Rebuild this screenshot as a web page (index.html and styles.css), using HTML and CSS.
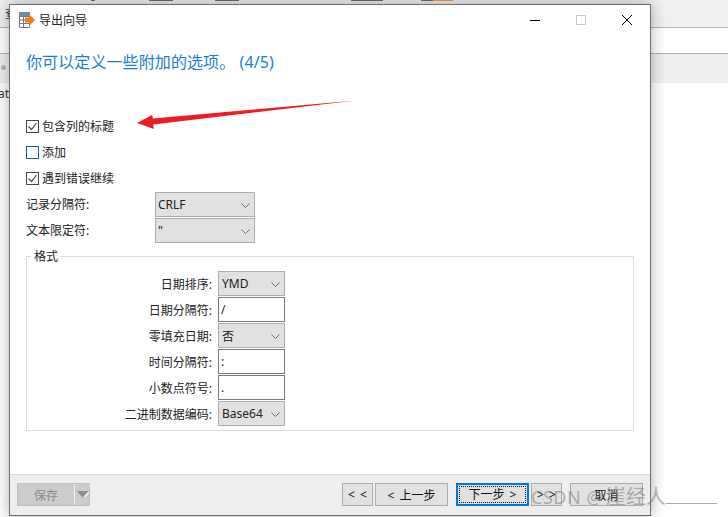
FILE: index.html
```html
<!DOCTYPE html>
<html lang="zh-CN">
<head>
  <meta charset="UTF-8" />
  <title>导出向导</title>
  <link rel="stylesheet" href="styles.css">
</head>
<body>
  <div class="backdrop">
    <div class="band band-top"><span class="cut">查</span></div>
    <div class="band band-white"></div>
    <div class="band band-tabs"><i class="tab-dot"></i></div>
    <div class="band band-rest"><span class="cut">at</span></div>
  </div>
  <div class="top-marks">
    <i class="mark mark-a"></i>
    <i class="mark mark-b"></i>
    <i class="mark mark-c"></i>
    <i class="mark mark-d"></i>
    <i class="mark mark-e"></i>
  </div>

  <div class="window">
    <div class="titlebar">
      <svg class="app-icon" width="17" height="18" viewBox="0 0 17 18">
        <path d="M1.500 1.500h10v15h-10z" fill="#fff" stroke="#77797c"/>
        <path d="M1.500 5.500h10M1.500 9h10M1.500 12.500h10M5.500 5.500v11" stroke="#77797c" fill="none"/>
        <path d="M1 1h11v4H1z" fill="#6f8dab"/>
        <path d="M7 6.500h4V3l6 6-6 6v-3.500H7z" fill="#f47b13"/>
      </svg>
      <span class="title">导出向导</span>
      <div class="win-buttons">
        <svg width="12" height="12" viewBox="0 0 12 12"><path d="M1 6.500h10" stroke="#000"/></svg>
        <svg width="12" height="12" viewBox="0 0 12 12"><path d="M1.500 1.500h9v9h-9z" stroke="#ccc" fill="none"/></svg>
        <svg width="12" height="12" viewBox="0 0 12 12"><path d="M1 1l10 10M11 1L1 11" stroke="#000" fill="none"/></svg>
      </div>
    </div>

    <div class="content">
      <h1>你可以定义一些附加的选项。 (4/5)</h1>

      <label class="check-row">
        <span class="box"><svg width="11" height="11" viewBox="0 0 11 11"><path d="M1.500 5.500l3 3 5-6.500" stroke="#444" stroke-width="1.200" fill="none"/></svg></span>
        包含列的标题
      </label>
      <label class="check-row">
        <span class="box focus"></span>
        添加
      </label>
      <label class="check-row">
        <span class="box"><svg width="11" height="11" viewBox="0 0 11 11"><path d="M1.500 5.500l3 3 5-6.500" stroke="#444" stroke-width="1.200" fill="none"/></svg></span>
        遇到错误继续
      </label>

      <div class="field-row">
        <span class="field-label">记录分隔符:</span>
        <div class="select wide">CRLF<svg class="chev" viewBox="0 0 11 6"><path d="M.5.500l5 5 5-5" stroke="#555" fill="none"/></svg></div>
      </div>
      <div class="field-row">
        <span class="field-label">文本限定符:</span>
        <div class="select wide">"<svg class="chev" viewBox="0 0 11 6"><path d="M.5.500l5 5 5-5" stroke="#555" fill="none"/></svg></div>
      </div>

      <fieldset class="format">
        <legend>格式</legend>
        <div class="format-grid">
          <span class="format-label">日期排序:</span>
          <div class="select">YMD<svg class="chev" viewBox="0 0 11 6"><path d="M.5.500l5 5 5-5" stroke="#555" fill="none"/></svg></div>
          <span class="format-label">日期分隔符:</span>
          <div class="input">/</div>
          <span class="format-label">零填充日期:</span>
          <div class="select">否<svg class="chev" viewBox="0 0 11 6"><path d="M.5.500l5 5 5-5" stroke="#555" fill="none"/></svg></div>
          <span class="format-label">时间分隔符:</span>
          <div class="input">:</div>
          <span class="format-label">小数点符号:</span>
          <div class="input">.</div>
          <span class="format-label">二进制数据编码:</span>
          <div class="select">Base64<svg class="chev" viewBox="0 0 11 6"><path d="M.5.500l5 5 5-5" stroke="#555" fill="none"/></svg></div>
        </div>
      </fieldset>
    </div>

    <div class="footer">
      <div class="save-btn">
        <span class="save-text">保存</span>
        <span class="save-split"><svg width="12" height="7" viewBox="0 0 12 7"><path d="M0 0h12L6 7z" fill="#8e8e8e"/><path d="M7 6l5-5" stroke="#fff" stroke-width="1.200"/></svg></span>
      </div>
      <div class="nav">
        <button class="btn small">&lt; &lt;</button>
        <button class="btn mid">&lt; 上一步</button>
        <button class="btn mid default"><span>下一步 &gt;</span></button>
        <button class="btn small">&gt; &gt;</button>
        <button class="btn cancel">取消</button>
      </div>
    </div>
  </div>

  <svg class="arrow" width="222" height="34" viewBox="0 0 222 34">
    <path d="M220.500.5L18 18.500 17 15 2 23l17 6-1-4.500z" fill="#ee1c25"/>
  </svg>

  <div class="watermark">CSDN @<span class="wm-cjk">崖经人</span><i class="wm-line"></i></div>
</body>
</html>
```

FILE: styles.css
```css
* {
  box-sizing: border-box;
}

html, body {
  margin: 0;
  height: 100%;
  overflow: hidden;
}

body {
  position: relative;
  width: 728px;
  height: 517px;
  background: #fff;
  font-family: "Noto Sans", "Noto Sans CJK SC", sans-serif;
  font-size: 12px;
  color: #222;
}

/* app behind the dialog */
.backdrop {
  display: flex;
  flex-direction: column;
  height: 100%;
}

.band {
  flex: none;
  overflow: hidden;
  font-size: 12px;
  color: #333;
}

.band-top {
  height: 28px;
  background: #f0f0f0;
  border-bottom: 1px solid #b4b4b4;
  padding-top: 4px;
}

.band-white {
  height: 26px;
  background: #fff;
  border-bottom: 1px solid #b4b4b4;
}

.band-tabs {
  height: 29px;
  background: #eee;
  padding: 11px 0 0 1px;
}

.tab-dot {
  display: block;
  width: 5px;
  height: 5px;
  border-radius: 50%;
  background: #b5b5b5;
}

.band-rest {
  flex: 1;
  background: #fff;
  padding-top: 2px;
}

.cut {
  display: block;
  margin-left: -2px;
}

.band-top .cut {
  margin-left: 5px;
}

.top-marks .mark {
  position: absolute;
  top: 0;
  height: 1px;
  background: #6b6b6b;
}

.mark-a { left: 91px; width: 4px; }
.mark-b { left: 149px; width: 24px; }
.mark-c { left: 215px; width: 24px; }
.mark-d { left: 351px; width: 32px; }
.mark-e { left: 421px; width: 12px; }

.top-marks .mark-e::after {
  content: "";
  position: absolute;
  left: 12px;
  top: 0;
  width: 20px;
  height: 1px;
  background: #f29a45;
}

/* dialog */
.window {
  position: absolute;
  left: 9px;
  top: 4px;
  width: 642px;
  height: 512px;
  display: flex;
  flex-direction: column;
  background: #fff;
  border: 1px solid #6e6e6e;
  box-shadow: 0 0 14px rgba(0, 0, 0, 0.32);
}

.titlebar {
  flex: none;
  height: 30px;
  display: flex;
  align-items: center;
  padding-left: 8px;
}

.app-icon {
  margin-right: 4px;
}

.title {
  font-size: 12px;
}

.win-buttons {
  margin-left: auto;
  display: flex;
  gap: 34px;
  padding-right: 17px;
  margin-top: -1px;
}

.win-buttons svg {
  display: block;
}

.content {
  flex: 1;
  padding: 15px 16px 0;
  display: flex;
  flex-direction: column;
}

h1 {
  margin: 0 0 39px;
  height: 24px;
  font-size: 16px;
  line-height: 24px;
  font-weight: 400;
  letter-spacing: 0.1px;
  color: #1a7ed6;
}

.check-row {
  height: 26px;
  display: flex;
  align-items: center;
  gap: 3px;
  font-size: 12px;
}

.box {
  width: 13px;
  height: 13px;
  flex: none;
  display: flex;
  align-items: center;
  justify-content: center;
  border: 1px solid #444;
  background: #fff;
}

.box.focus {
  border-color: #0e5a9c;
}

.box svg {
  flex: none;
}

.field-row {
  height: 26px;
  display: flex;
  align-items: center;
}

.field-label {
  width: 129px;
}

.select,
.input {
  position: relative;
  height: 25px;
  display: flex;
  align-items: center;
  padding-left: 3px;
  font-size: 12px;
}

.select {
  background: #e1e1e1;
  border: 1px solid #adadad;
}

.select.wide {
  width: 100px;
  padding-left: 2px;
}

.input {
  background: #fff;
  border: 1px solid #7a7a7a;
  padding-left: 2px;
}

.chev {
  position: absolute;
  right: 4px;
  top: 10px;
  width: 9px;
  height: 5px;
}

.format {
  margin: 5px 0 0;
  padding: 0;
  width: 608px;
  height: 183px;
  border: 1px solid #dcdcdc;
  min-width: 0;
}

.format legend {
  margin-left: 4px;
  padding: 2px 3px 0;
  font-size: 12px;
  line-height: 14px;
}

.format-grid {
  display: grid;
  grid-template-columns: 185px 67px;
  grid-auto-rows: 25px;
  row-gap: 1px;
  column-gap: 6px;
  margin-top: 7px;
  align-items: center;
}

.format-label {
  text-align: right;
}

/* bottom bar */
.footer {
  flex: none;
  height: 41px;
  display: flex;
  align-items: flex-start;
  justify-content: space-between;
  padding: 8px 0 0 7px;
  background: #eee;
  border-top: 1px solid #d8d8d8;
}

.save-btn {
  width: 73px;
  height: 23px;
  display: flex;
  align-items: center;
  background: #ccc;
  border: 1px solid #c2c2c2;
}

.save-text {
  width: 56px;
  text-align: center;
  color: #8a8a8a;
}

.save-split {
  display: flex;
  align-items: center;
  height: 100%;
  padding-left: 2px;
  border-left: 1px solid #f0f0f0;
}

.nav {
  display: flex;
  gap: 2px;
  padding-right: 7px;
}

.btn {
  height: 23px;
  padding: 0;
  background: #e1e1e1;
  border: 1px solid #adadad;
  font-family: inherit;
  font-size: 12px;
  word-spacing: 2px;
  color: #111;
}

.btn.small {
  width: 31px;
}

.btn.mid {
  width: 73px;
}

.btn.default {
  margin-left: 6px;
  border: 2px solid #0078d7;
  padding: 1px;
}

.btn.default span {
  display: block;
  line-height: 17px;
  outline: 1px dotted #111;
  outline-offset: -1px;
}

.btn.cancel {
  width: 73px;
  margin-left: 6px;
}

/* annotations over the screenshot */
.arrow {
  position: absolute;
  left: 135px;
  top: 100px;
}

.watermark {
  position: absolute;
  left: 531px;
  top: 484px;
  font-size: 18px;
  line-height: 26px;
  letter-spacing: 0.5px;
  color: rgba(120, 120, 120, 0.55);
  white-space: nowrap;
}

.wm-cjk {
  font-size: 20px;
  letter-spacing: 0;
  margin-left: 3px;
}

.wm-line {
  display: inline-block;
  width: 51px;
  height: 1px;
  background: #aaa;
}
```
